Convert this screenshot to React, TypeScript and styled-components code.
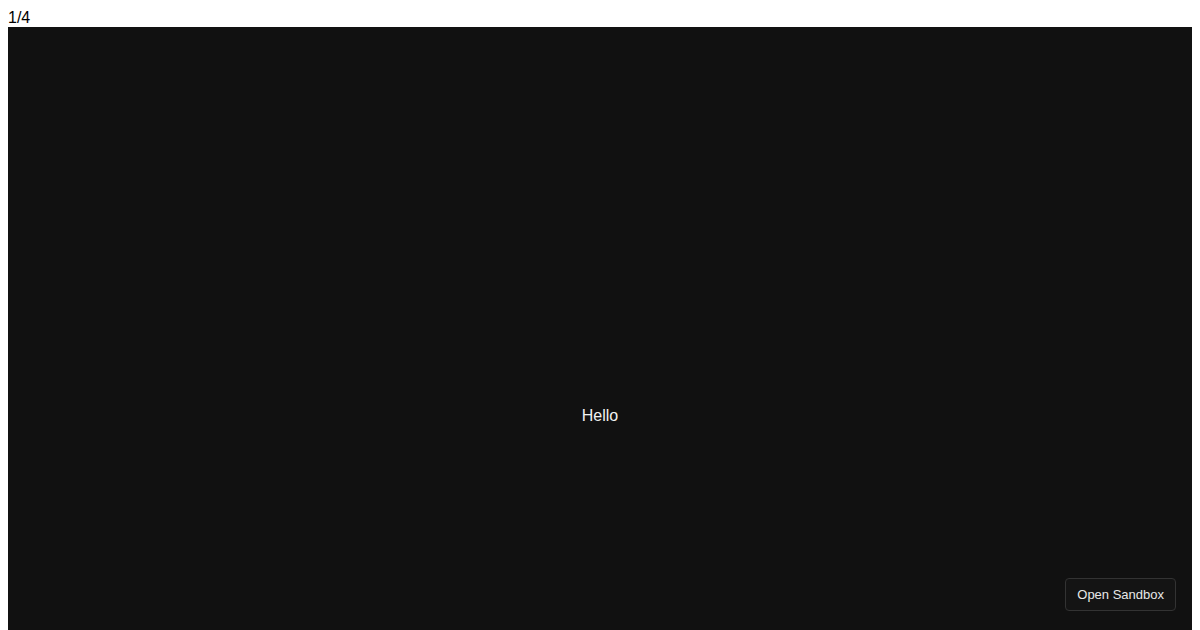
import React, { useState } from 'react';
import styled, { createGlobalStyle } from 'styled-components';

const GlobalStyle = createGlobalStyle`
  body {
    margin: 8px;
    font-family: "Liberation Sans", Arial, sans-serif;
    font-size: 16px;
    color: #000;
    background: #fff;
    overflow: hidden;
  }
`;

const Counter = styled.div`
  line-height: 19px;
  height: 19px;
`;

const Carousel = styled.div`
  position: relative;
`;

const Slide = styled.div`
  height: 778px;
  background: #111111;
  color: #f2f2f2;
  display: flex;
  align-items: center;
  justify-content: center;
  font-size: 16px;
`;

const NavButton = styled.button<{ $side: 'left' | 'right'; $disabled?: boolean }>`
  position: absolute;
  top: 270px;
  ${(p) => (p.$side === 'left' ? 'left: -14px;' : 'right: -14px;')}
  background: none;
  border: none;
  padding: 0;
  font-family: "Liberation Sans", Arial, sans-serif;
  font-size: 20px;
  line-height: 20px;
  color: ${(p) => (p.$disabled ? '#d8d8c0' : '#3a2a20')};
  cursor: pointer;
`;

const SandboxButton = styled.button`
  position: fixed;
  right: 24px;
  bottom: 19px;
  height: 33px;
  padding: 0 11px;
  background: #141414;
  border: 1px solid #333333;
  border-radius: 4px;
  color: #e8e8e8;
  font-family: "Liberation Sans", Arial, sans-serif;
  font-size: 13px;
  cursor: pointer;
`;

const slides = ['Hello', 'World', 'Foo', 'Bar'];

export default function App() {
  const [index, setIndex] = useState(0);

  return (
    <>
      <GlobalStyle />
      <Counter>
        {index + 1}/{slides.length}
      </Counter>
      <Carousel>
        <NavButton
          $side="left"
          $disabled={index === 0}
          onClick={() => setIndex(Math.max(0, index - 1))}
        >
          ‹
        </NavButton>
        <Slide>{slides[index]}</Slide>
        <NavButton
          $side="right"
          $disabled={index === slides.length - 1}
          onClick={() => setIndex(Math.min(slides.length - 1, index + 1))}
        >
          ›
        </NavButton>
      </Carousel>
      <SandboxButton>Open Sandbox</SandboxButton>
    </>
  );
}
